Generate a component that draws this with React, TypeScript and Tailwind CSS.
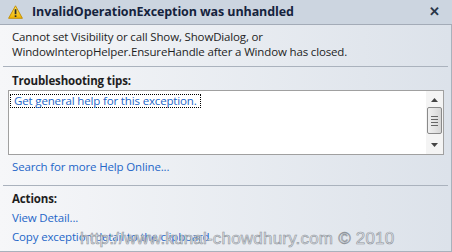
export default function App() {
  return (
    <div className="relative w-[452px] h-[252px] overflow-hidden font-['Open_Sans',sans-serif] text-[12px] text-[#1e1e1e]">
      <div className="flex h-[25px] items-center border-b border-[#a3abb7] bg-[#ccd5e0] pl-[8px] pr-[8px]">
        <svg width="15" height="14" viewBox="0 0 15 14" className="shrink-0">
          <defs>
            <linearGradient id="warn" x1="0" y1="0" x2="0" y2="1">
              <stop offset="0" stopColor="#ffe45c" />
              <stop offset="1" stopColor="#f0b400" />
            </linearGradient>
          </defs>
          <path d="M7.5 0.8 L14.4 13.3 L0.6 13.3 Z" fill="url(#warn)" stroke="#c08a00" strokeWidth="0.9" strokeLinejoin="round" />
          <rect x="6.7" y="4.2" width="1.7" height="5" fill="#2a2a2a" />
          <rect x="6.7" y="10.3" width="1.7" height="1.7" fill="#2a2a2a" />
        </svg>
        <span className="ml-[9px] text-[12.5px] font-bold text-[#15233d] tracking-[-0.1px]">
          InvalidOperationException was unhandled
        </span>
        <span className="ml-auto mr-[4px] text-[13px] font-bold text-[#2a3548]">✕</span>
      </div>
      <div className="h-[227px] border-r border-b border-[#a9b1bc] bg-gradient-to-r from-[#f6f7f9] to-[#dce2ea] flex flex-col">
        <p className="px-[12px] pt-[4px] leading-[15px] text-[11.5px] tracking-[-0.15px]">
          Cannot set Visibility or call Show, ShowDialog, or
          <br />
          WindowInteropHelper.EnsureHandle after a Window has closed.
        </p>
        <div className="mx-[3px] mt-[7px] border-t border-[#aab2bd]" />
        <div className="px-[12px] pt-[6px] text-[11.5px] font-bold leading-[15px] tracking-[-0.15px]">Troubleshooting tips:</div>
        <div className="ml-[8px] mt-[2px] flex h-[65px] w-[436px] border border-[#a0a0a0] bg-white">
          <div className="flex-1 pl-[1px] pt-[1px]">
            <span className="inline-block border border-dotted border-black px-[3px] leading-[12px] text-[11.5px] tracking-[-0.15px] text-[#2466c8]">
              Get general help for this exception.
            </span>
          </div>
          <div className="flex w-[17px] flex-col items-center bg-[#f4f4f4]">
            <svg width="7" height="4" viewBox="0 0 7 4" className="mt-[7px]">
              <path d="M0 4 L3.5 0 L7 4 Z" fill="#444" />
            </svg>
            <div className="mt-[5px] flex h-[27px] w-[15px] flex-col items-center justify-center gap-[2px] rounded-[2px] border border-[#8a8a8a] bg-gradient-to-r from-[#f0f0f0] via-[#e4e4e4] to-[#d6d6d6]">
              <div className="h-px w-[7px] bg-[#666]" />
              <div className="h-px w-[7px] bg-[#666]" />
              <div className="h-px w-[7px] bg-[#666]" />
              <div className="h-px w-[7px] bg-[#666]" />
            </div>
            <svg width="7" height="4" viewBox="0 0 7 4" className="mt-[9px]">
              <path d="M0 0 L3.5 4 L7 0 Z" fill="#444" />
            </svg>
          </div>
        </div>
        <div className="px-[12px] pt-[4px] text-[11.5px] leading-[15px] tracking-[-0.15px] text-[#2466c8]">Search for more Help Online...</div>
        <div className="mx-[3px] mt-[11px] border-t border-[#aab2bd]" />
        <div className="px-[12px] pt-[5px] text-[11.5px] font-bold leading-[15px] tracking-[-0.15px]">Actions:</div>
        <div className="px-[12px] pt-[4px] text-[11.5px] leading-[15px] tracking-[-0.15px] text-[#2466c8]">View Detail...</div>
        <div className="px-[12px] pt-[4px] text-[11.5px] leading-[15px] tracking-[-0.15px] text-[#2466c8]">Copy exception detail to the clipboard</div>
      </div>
      <div className="absolute left-[80px] top-[226px] font-['Liberation_Sans',sans-serif] text-[17px] text-[#e4e7ec] [-webkit-text-stroke:0.6px_#8f959c] tracking-[0.2px] whitespace-nowrap">
        http://www.kunal-chowdhury.com © 2010
      </div>
    </div>
  );
}
